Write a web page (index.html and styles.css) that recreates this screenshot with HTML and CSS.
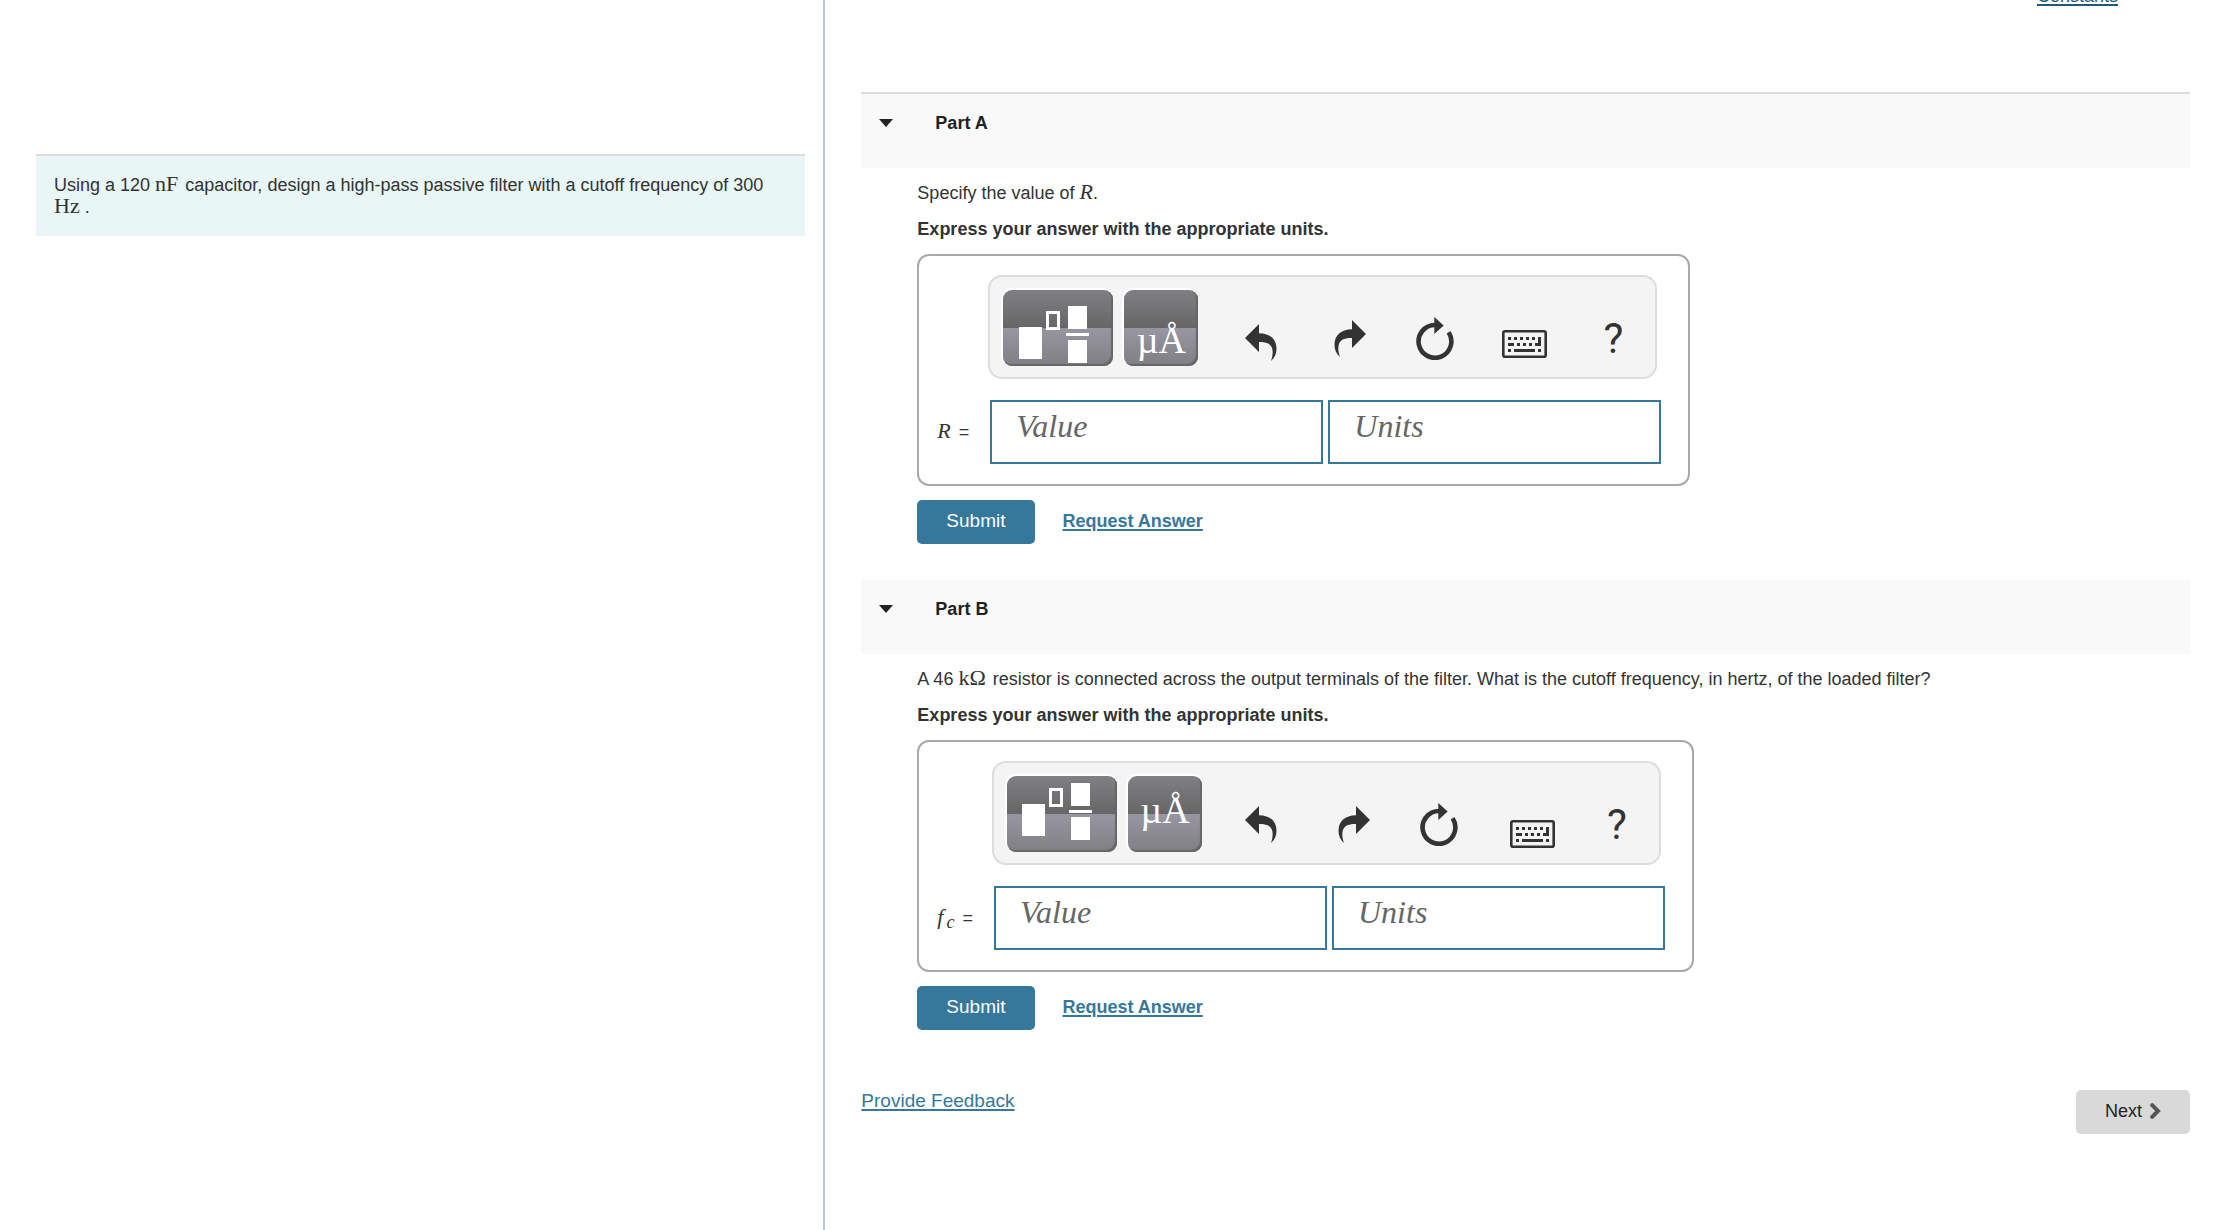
FILE: index.html
```html
<!DOCTYPE html>
<html lang="en">
<head>
  <meta charset="UTF-8" />
  <meta name="viewport" content="width=device-width, initial-scale=1.0"/>
  <title>High-pass filter</title>
  <link rel="stylesheet" href="styles.css">
</head>
<body>
  <!-- shared toolbar icons -->
  <svg class="icon-defs" aria-hidden="true">
    <symbol id="templates" viewBox="0 0 72 58" overflow="visible">
      <rect x="0" y="21" width="23" height="32" fill="#fff"/>
      <rect x="28.5" y="6.5" width="11" height="16" fill="none" stroke="#fff" stroke-width="3"/>
      <rect x="49" y="0" width="19" height="23" fill="#fff"/>
      <rect x="47" y="27" width="23" height="3" fill="#fff"/>
      <rect x="49" y="34" width="19" height="23" fill="#fff"/>
    </symbol>
    <symbol id="undo" viewBox="0 0 32 37">
      <path d="M0 14 L14 0 V9.3 C25 9.5 31.5 15 31.5 25 C31.5 30 29.5 34 26 37 C28 31 28 27 27 24 C25.5 19.5 21 18 14 18 V28 Z"/>
    </symbol>
    <symbol id="redo" viewBox="0 0 32 37">
      <path d="M32 14 L18 0 V9.3 C7 9.5 0.5 15 0.5 25 C0.5 30 2.5 34 6 37 C4 31 4 27 5 24 C6.5 19.5 11 18 18 18 V28 Z"/>
    </symbol>
    <symbol id="reset" viewBox="0 0 38 43">
      <path d="M32.6 15.3 A16.4 16.4 0 1 1 19 8" fill="none" stroke="#333" stroke-width="4.6"/>
      <path d="M18.3 0 L27.7 8.5 L18.3 17 Z"/>
    </symbol>
    <symbol id="keyboard" viewBox="0 0 45 28">
      <rect x="1.3" y="1.3" width="42.4" height="25.4" rx="1.8" fill="none" stroke="#333" stroke-width="2.6"/>
      <path d="M6 7h3v3H6z M12 7h3v3h-3z M18 7h3v3h-3z M24 7h3v3h-3z M30 7h3v3h-3z M36 7h3v9h-6v-3h3z M6 13h6v3H6z M15 13h3v3h-3z M21 13h3v3h-3z M27 13h3v3h-3z M6 19h3v3H6z M12 19h21v3H12z M36 19h3v3h-3z"/>
    </symbol>
  </svg>

  <div class="page">
    <aside class="problem">
      <p class="statement">Using a 120 <span class="math unit">nF</span> capacitor, design a high-pass passive filter with a cutoff frequency of 300 <span class="math">Hz</span> .</p>
    </aside>

    <main class="parts">
      <div class="top-links"><a class="constants" href="#">Constants</a></div>

      <section class="part">
        <header class="part-header first">
          <button class="toggle" aria-label="Collapse Part A"><svg width="14" height="8" viewBox="0 0 14 8"><path d="M0 0h14L7 8z"/></svg></button>
          <h2>Part A</h2>
        </header>
        <div class="part-body">
          <p>Specify the value of <span class="math"><i>R</i></span>.</p>
          <p class="instructions">Express your answer with the appropriate units.</p>
          <div class="answer-box">
            <div class="toolbar">
              <button class="tool" aria-label="Templates"><svg width="110" height="76"><use href="#templates" x="16" y="16" width="72" height="58"/></svg></button>
              <button class="tool tool-units tool-low" aria-label="Units">µÅ</button>
              <div class="actions">
                <button aria-label="Undo"><svg width="84" height="76"><use href="#undo" x="26" y="34" width="32" height="37"/></svg></button>
                <button aria-label="Redo"><svg width="84" height="76"><use href="#redo" x="27" y="30" width="32" height="37"/></svg></button>
                <button aria-label="Reset"><svg width="84" height="76"><use href="#reset" x="21" y="27" width="38" height="43"/></svg></button>
                <button aria-label="Keyboard shortcuts"><svg width="84" height="76"><use href="#keyboard" x="19" y="40" width="45" height="28"/></svg></button>
                <button class="help" aria-label="Help">?</button>
              </div>
            </div>
            <label for="value-a"><span class="math"><i>R</i></span> =</label>
            <div class="fields">
              <input type="text" id="value-a" placeholder="Value">
              <input type="text" aria-label="Units" placeholder="Units">
            </div>
          </div>
          <div class="submit-row">
            <button class="submit">Submit</button>
            <a class="request" href="#">Request Answer</a>
          </div>
        </div>
      </section>

      <section class="part">
        <header class="part-header">
          <button class="toggle" aria-label="Collapse Part B"><svg width="14" height="8" viewBox="0 0 14 8"><path d="M0 0h14L7 8z"/></svg></button>
          <h2>Part B</h2>
        </header>
        <div class="part-body">
          <p>A 46 <span class="math unit">kΩ</span> resistor is connected across the output terminals of the filter. What is the cutoff frequency, in hertz, of the loaded filter?</p>
          <p class="instructions">Express your answer with the appropriate units.</p>
          <div class="answer-box">
            <div class="toolbar">
              <button class="tool" aria-label="Templates"><svg width="110" height="76"><use href="#templates" x="15" y="7" width="72" height="58"/></svg></button>
              <button class="tool tool-units" aria-label="Units">µÅ</button>
              <div class="actions">
                <button aria-label="Undo"><svg width="84" height="76"><use href="#undo" x="22" y="30" width="32" height="37"/></svg></button>
                <button aria-label="Redo"><svg width="84" height="76"><use href="#redo" x="27" y="30" width="32" height="37"/></svg></button>
                <button aria-label="Reset"><svg width="84" height="76"><use href="#reset" x="21" y="27" width="38" height="43"/></svg></button>
                <button aria-label="Keyboard shortcuts"><svg width="84" height="76"><use href="#keyboard" x="23" y="44" width="45" height="28"/></svg></button>
                <button class="help" aria-label="Help">?</button>
              </div>
            </div>
            <label for="value-b"><span class="math"><i>f<sub>c</sub></i></span> =</label>
            <div class="fields">
              <input type="text" id="value-b" placeholder="Value">
              <input type="text" aria-label="Units" placeholder="Units">
            </div>
          </div>
          <div class="submit-row">
            <button class="submit">Submit</button>
            <a class="request" href="#">Request Answer</a>
          </div>
        </div>
      </section>

      <footer class="page-footer">
        <a class="feedback" href="#">Provide Feedback</a>
        <button class="next">Next <svg width="11" height="16" viewBox="0 0 11 16"><path d="M2.2 2.2 L8 8 L2.2 13.8" fill="none" stroke="#555" stroke-width="4" stroke-linecap="round"/></svg></button>
      </footer>
    </main>
  </div>
</body>
</html>
```
FILE: styles.css
```css
* {
  box-sizing: border-box;
}

body {
  margin: 0;
  background: #fff;
  color: #333;
  font-family: "Liberation Sans", Arial, sans-serif;
  font-size: 18px;
  line-height: 22px;
}

p, h2 {
  margin: 0;
}

button {
  border: none;
  padding: 0;
  background: none;
  font: inherit;
  cursor: pointer;
}

svg {
  display: block;
}

.icon-defs {
  position: absolute;
  width: 0;
  height: 0;
}

.page {
  display: flex;
  height: 100vh;
  overflow: hidden;
}

/* left pane */
.problem {
  flex: 0 0 calc(37% + 1px);
  padding: 154px 18px 0 36px;
  border-right: 2px solid #b9cade;
}

.statement {
  padding: 18px;
  background: #e8f6f6;
  border-top: 2px solid #ddd;
}

.math {
  font-family: "Liberation Serif", "Times New Roman", serif;
  font-size: 22px;
  line-height: 18px;
}

.math sub {
  margin-left: 3px;
  font-size: 18px;
  line-height: 0;
  vertical-align: -4px;
}

.unit {
  padding-right: 2px;
}

/* right pane */
.parts {
  flex: 1;
  min-width: 0;
  padding: 0 38px 0 36px;
}

.top-links {
  display: flex;
  justify-content: flex-end;
  margin-top: -15px;
  padding: 0 72px 85px 0;
}

a {
  color: #35789b;
  text-decoration: underline;
  text-decoration-thickness: 2px;
  text-underline-offset: 2px;
}

.top-links .constants {
  color: #205a74;
}

.part {
  margin-bottom: 36px;
}

.part-header {
  display: flex;
  align-items: center;
  gap: 42px;
  padding: 18px 18px 34px;
  background: #f9f9f9;
  color: #222;
}

.part-header.first {
  border-top: 2px solid #ddd;
}

.part-header h2 {
  font-size: 18px;
  line-height: 22px;
}

.toggle svg {
  fill: #222;
}

.part-body {
  display: flex;
  flex-direction: column;
  align-items: flex-start;
  gap: 14px;
  padding: 14px 0 0 56px;
}

.instructions {
  font-weight: bold;
}

.answer-box {
  display: grid;
  grid-template-columns: auto auto;
  align-items: center;
  column-gap: 19px;
  row-gap: 21px;
  padding: 19px 27px 20px 18px;
  border: 2px solid #a9a9a9;
  border-radius: 12px;
}

.answer-box label {
  display: flex;
  align-items: baseline;
  gap: 8px;
}

.toolbar {
  grid-column: 2;
  justify-self: start;
  display: flex;
  gap: 11px;
  padding: 13px 0 11px 13px;
  background: #f4f4f4;
  border: 2px solid #ddd;
  border-radius: 14px;
}

.tool {
  width: 110px;
  height: 76px;
  border-radius: 9px;
  background: linear-gradient(#807f84, #666 50%, #9896a1 50%, #807f83);
  box-shadow: -1px -1px 0 1px #fff, inset -2px -2px 1px #666;
}

.tool-units {
  width: 74px;
  padding-bottom: 8px;
  color: #fff;
  font-family: "Liberation Serif", "Times New Roman", serif;
  font-size: 38px;
  line-height: 38px;
}

.tool-low {
  padding: 24px 0 0;
}

.actions {
  display: flex;
  gap: 4px;
  margin-left: 10px;
}

.actions button {
  width: 84px;
  height: 76px;
  fill: #333;
}

.actions .help {
  padding-top: 22px;
  color: #333;
  font-family: Roboto, sans-serif;
  font-size: 42px;
  line-height: 42px;
}

.fields {
  display: flex;
  gap: 5px;
  padding-left: 2px;
}

.fields input {
  width: 333px;
  height: 64px;
  padding: 0 24px 12px;
  border: 2px solid #35789b;
  background: #fff;
  font-family: "Liberation Serif", "Times New Roman", serif;
  font-size: 32px;
}

.fields input::placeholder {
  color: #666;
  font-style: italic;
}

.submit-row {
  display: flex;
  align-items: flex-start;
  gap: 28px;
}

.submit,
.next {
  padding: 10px 29px 12px;
  border-radius: 5px;
}

.submit {
  background: #35789b;
  color: #fff;
  font-size: 19px;
}

.request {
  padding-top: 10px;
  font-weight: bold;
}

.page-footer {
  display: flex;
  justify-content: space-between;
  align-items: flex-start;
  padding-top: 24px;
}

.feedback {
  font-size: 19px;
}

.next {
  display: flex;
  align-items: center;
  gap: 8px;
  background: #d9d9d9;
  color: #222;
}
```
